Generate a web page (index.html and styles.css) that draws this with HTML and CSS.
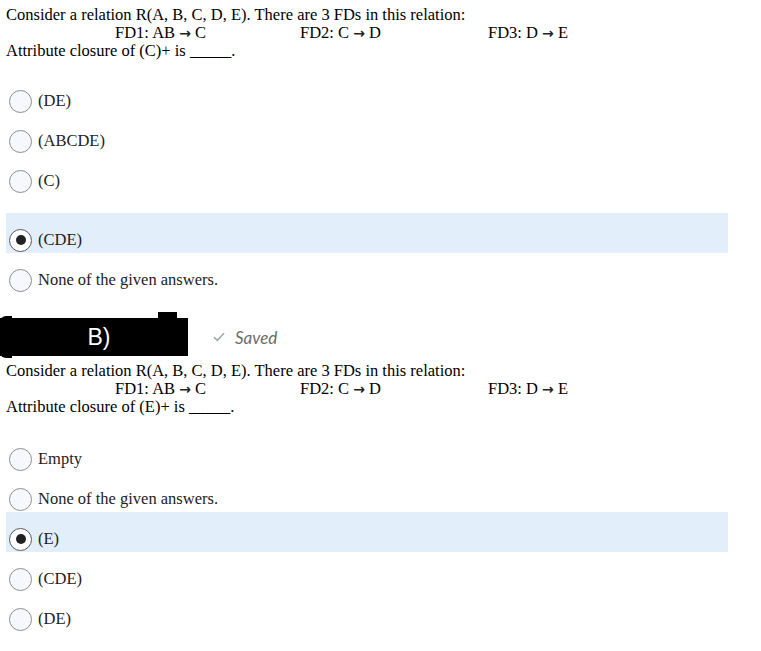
FILE: index.html
```html
<!DOCTYPE html>
<html>
<head>
<meta charset="utf-8">
<link rel="stylesheet" href="styles.css">
</head>
<body>
<div class="page">
  <section class="question">
    <div class="qtext">
      <p>Consider a relation R(A, B, C, D, E). There are 3 FDs in this relation:</p>
      <div class="fds"><span class="fd fd1">FD1: AB <span class="arrow">→</span> C</span><span class="fd fd2">FD2: C <span class="arrow">→</span> D</span><span class="fd">FD3: D <span class="arrow">→</span> E</span></div>
      <p>Attribute closure of (C)+ is _____.</p>
    </div>
    <ul class="options first">
      <li class="opt"><span class="radio"></span><span class="label">(DE)</span></li>
      <li class="opt"><span class="radio"></span><span class="label">(ABCDE)</span></li>
      <li class="opt"><span class="radio"></span><span class="label">(C)</span></li>
      <li class="opt selected gap"><span class="radio"></span><span class="label">(CDE)</span></li>
      <li class="opt"><span class="radio"></span><span class="label">None of the given answers.</span></li>
    </ul>
  </section>

  <div class="qhead">
    <div class="redact"><span class="bump"></span><span class="blob"></span><span class="qnum">B)</span></div>
    <span class="saved"><svg class="check" width="12" height="10" viewBox="0 0 12 10"><path d="M1 5.2 L4.3 8.4 L11 1.2" fill="none" stroke="#a3a8ad" stroke-width="1.6"/></svg><span>Saved</span></span>
  </div>

  <section class="question">
    <div class="qtext">
      <p>Consider a relation R(A, B, C, D, E). There are 3 FDs in this relation:</p>
      <div class="fds"><span class="fd fd1">FD1: AB <span class="arrow">→</span> C</span><span class="fd fd2">FD2: C <span class="arrow">→</span> D</span><span class="fd">FD3: D <span class="arrow">→</span> E</span></div>
      <p>Attribute closure of (E)+ is _____.</p>
    </div>
    <ul class="options second">
      <li class="opt"><span class="radio"></span><span class="label">Empty</span></li>
      <li class="opt"><span class="radio"></span><span class="label">None of the given answers.</span></li>
      <li class="opt selected"><span class="radio"></span><span class="label">(E)</span></li>
      <li class="opt"><span class="radio"></span><span class="label">(CDE)</span></li>
      <li class="opt"><span class="radio"></span><span class="label">(DE)</span></li>
    </ul>
  </section>
</div>
</body>
</html>
```
FILE: styles.css
```css
html, body {
  margin: 0;
  padding: 0;
  background: #ffffff;
}
.page {
  padding: 6px 33px 0 6px;
  font-family: "Liberation Serif", "Times New Roman", serif;
  font-size: 16.5px;
  color: #000;
}
.qtext p {
  margin: 0;
  line-height: 18px;
}
.fds {
  display: flex;
  line-height: 18px;
  padding-left: 109px;
}
.fd1 { width: 185px; }
.fd2 { width: 188px; }
.arrow {
  font-family: "DejaVu Sans", sans-serif;
  font-size: 14px;
  font-weight: bold;
  color: #222;
}
.options {
  list-style: none;
  margin: 14px 0 0 0;
  padding: 0;
}
.options.second { margin-top: 16px; }
.opt {
  display: flex;
  align-items: center;
  height: 40px;
  box-sizing: border-box;
  padding: 16px 0 2px 3px;
  color: #222;
}
.opt.gap { margin-top: 19px; }
.opt.selected { background: #e2eef9; }
.radio {
  width: 23px;
  height: 23px;
  box-sizing: border-box;
  border-radius: 50%;
  border: 1px solid #8e8e8e;
  background: #f7f8fd;
  margin-right: 6px;
  flex: none;
  display: flex;
  align-items: center;
  justify-content: center;
}
.selected .radio {
  background: #ffffff;
  border: 1.5px solid #5a5a5a;
}
.selected .radio::after {
  content: "";
  width: 10px;
  height: 10px;
  border-radius: 50%;
  background: #222;
}
.label {
  line-height: 20px;
}
.qhead {
  display: flex;
  align-items: center;
  height: 40px;
  margin: 24px 0 5px -6px;
}
.redact {
  position: relative;
  width: 188px;
  height: 38px;
  background: #000;
  display: flex;
  align-items: center;
  justify-content: center;
}
.bump {
  position: absolute;
  left: 158px;
  top: -6px;
  width: 19px;
  height: 8px;
  background: #000;
}
.blob {
  position: absolute;
  left: 0;
  top: -2px;
  width: 12px;
  height: 42px;
  border-radius: 6px 0 0 6px;
  background: #000;
}
.qnum {
  font-family: "Liberation Sans", Arial, sans-serif;
  font-size: 23px;
  color: #fff;
  margin-left: 10px;
}
.saved {
  display: flex;
  align-items: center;
  margin-left: 25px;
  font-family: Lato, "Open Sans", sans-serif;
  font-style: italic;
  font-size: 17px;
  color: #6b6b6b;
}
.check {
  margin-right: 10px;
}
```
